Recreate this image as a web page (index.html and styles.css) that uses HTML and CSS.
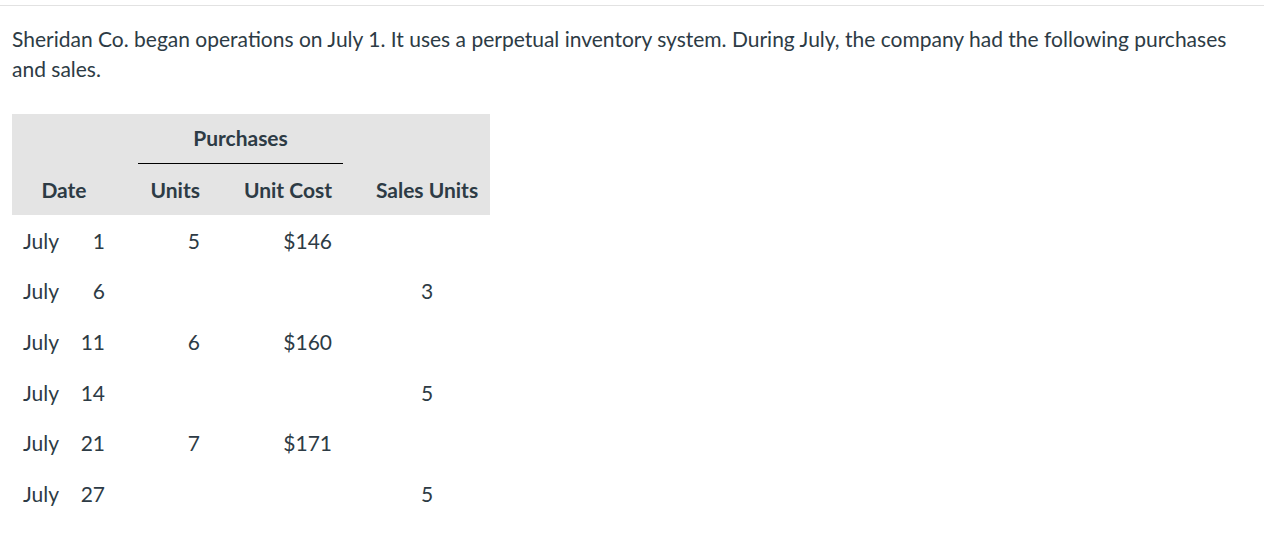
FILE: index.html
```html
<!DOCTYPE html>
<html>
<head>
<meta charset="utf-8">
<link rel="stylesheet" href="styles.css">
</head>
<body>
<div class="page">
  <p class="intro">Sheridan Co. began operations on July 1. It uses a perpetual inventory system. During July, the company had the following purchases and sales.</p>
  <table class="inv">
    <colgroup>
      <col class="w-date">
      <col class="w-units">
      <col class="w-cost">
      <col class="w-sales">
    </colgroup>
    <thead>
      <tr class="group-row">
        <th></th>
        <th class="c-purch" colspan="2"><div class="purch-label">Purchases</div></th>
        <th></th>
      </tr>
      <tr class="head-row">
        <th class="h-date">Date</th>
        <th class="c-units">Units</th>
        <th class="c-cost">Unit Cost</th>
        <th class="c-sales">Sales Units</th>
      </tr>
    </thead>
    <tbody>
      <tr><td class="c-date"><span class="mon">July</span><span class="day">1</span></td><td class="c-units">5</td><td class="c-cost">$146</td><td class="c-sales"></td></tr>
      <tr><td class="c-date"><span class="mon">July</span><span class="day">6</span></td><td class="c-units"></td><td class="c-cost"></td><td class="c-sales">3</td></tr>
      <tr><td class="c-date"><span class="mon">July</span><span class="day">11</span></td><td class="c-units">6</td><td class="c-cost">$160</td><td class="c-sales"></td></tr>
      <tr><td class="c-date"><span class="mon">July</span><span class="day">14</span></td><td class="c-units"></td><td class="c-cost"></td><td class="c-sales">5</td></tr>
      <tr><td class="c-date"><span class="mon">July</span><span class="day">21</span></td><td class="c-units">7</td><td class="c-cost">$171</td><td class="c-sales"></td></tr>
      <tr><td class="c-date"><span class="mon">July</span><span class="day">27</span></td><td class="c-units"></td><td class="c-cost"></td><td class="c-sales">5</td></tr>
    </tbody>
  </table>
</div>
</body>
</html>
```

FILE: styles.css
```css
html, body {
  margin: 0;
  padding: 0;
  background: #ffffff;
}

body {
  font-family: Lato, "Open Sans", sans-serif;
  color: #2d3b45;
  font-size: 21px;
}

.page {
  width: 1264px;
  margin-top: 5px;
  border-top: 1px solid #e2e2e2;
  padding: 18px 12px 0 12px;
  box-sizing: border-box;
}

.intro {
  margin: 0;
  width: 1235px;
  font-size: 21px;
  line-height: 30px;
}

.inv {
  margin-top: 30px;
  width: 478px;
  border-collapse: collapse;
  border-spacing: 0;
  table-layout: fixed;
}

.w-date { width: 115px; }
.w-units { width: 84px; }
.w-cost { width: 132px; }
.w-sales { width: 147px; }

.inv thead tr {
  background: #e4e4e4;
}

.inv th,
.inv td {
  padding: 0;
  font-size: 21px;
  line-height: 27px;
  white-space: nowrap;
}

.inv th {
  font-weight: 700;
}

.group-row {
  height: 50px;
}

.head-row {
  height: 51px;
}

.inv tbody tr {
  height: 50.6px;
}

.h-date {
  text-align: center;
  padding-right: 11px !important;
}

.c-units {
  text-align: right;
  padding-right: 11px !important;
}

.c-cost {
  text-align: right;
  padding-right: 11px !important;
}

.c-sales {
  text-align: center;
  padding-left: 32px !important;
  padding-right: 11px !important;
}

.c-purch {
  vertical-align: top;
  padding-left: 11px !important;
}

.purch-label {
  border-bottom: 1px solid #000000;
  height: 50px;
  box-sizing: border-box;
  padding-top: 10px;
  text-align: center;
}

td.c-date {
  padding-left: 11px;
}

.mon {
  display: inline-block;
  width: 37px;
}

.day {
  display: inline-block;
  width: 45px;
  text-align: right;
}
```
